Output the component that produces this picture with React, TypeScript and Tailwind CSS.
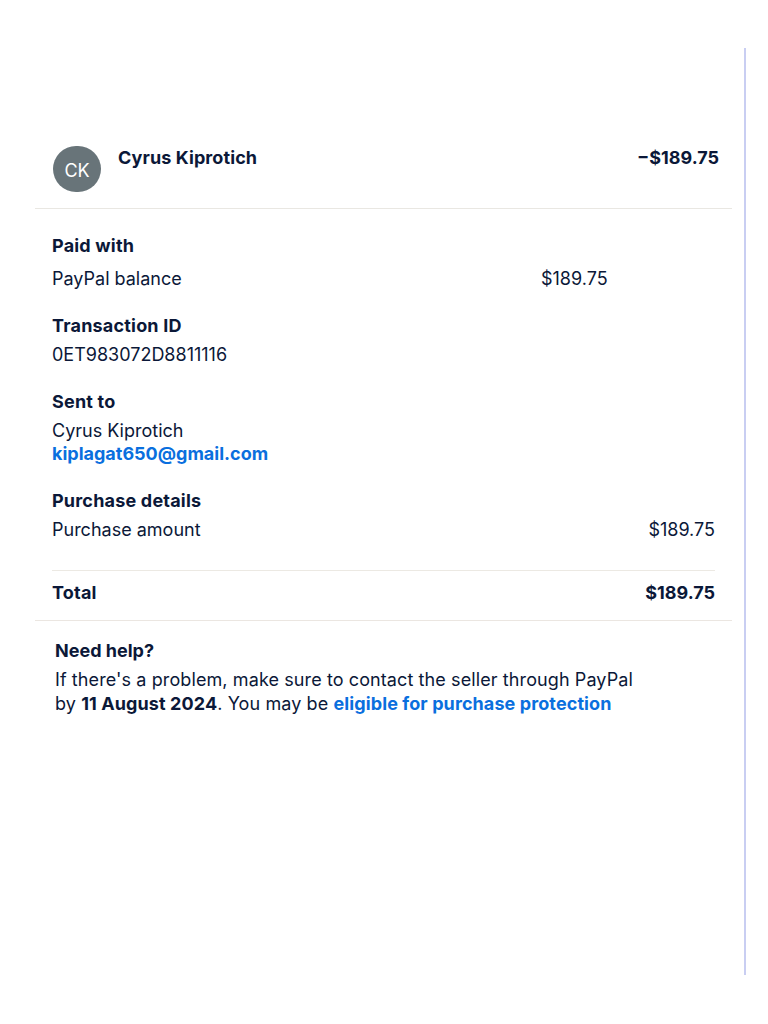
export default function App() {
  return (
    <div className="min-h-[1024px] w-[768px] bg-white text-[#0b1838]" style={{ fontFamily: 'Inter, "Liberation Sans", sans-serif' }}>
      <div className="flex">
        <div className="w-[744px] pt-[48px]">
          <div className="h-[927px] pl-[35px] pr-[12px] pt-[97px]">
            {/* Header */}
            <div className="flex items-start justify-between border-b border-[#e9e7e2] pb-[16px] pl-[18px] pr-[13px]">
              <div className="flex items-start gap-[17px]">
                <div className="mt-[1px] flex h-[46px] w-[48px] items-center justify-center rounded-full bg-[#687479] pt-[2px] text-[18px] text-white">
                  CK
                </div>
                <div className="pt-[1px] text-[18px] font-bold leading-[24px] tracking-[0.1px]">Cyrus Kiprotich</div>
              </div>
              <div className="pt-[1px] text-[18px] font-bold leading-[24px]">−$189.75</div>
            </div>

            {/* Details */}
            <div className="pl-[17px] pr-[17px] pt-[25px]">
              <div className="text-[18px] font-bold leading-[24px] tracking-[0.2px]">Paid with</div>
              <div className="mt-[9px] flex text-[18px] leading-[24px]">
                <span className="w-[489px]">PayPal balance</span>
                <span>$189.75</span>
              </div>

              <div className="mt-[23px] text-[18px] font-bold leading-[24px] tracking-[0.2px]">Transaction ID</div>
              <div className="mt-[5px] text-[18px] leading-[24px]">0ET983072D8811116</div>

              <div className="mt-[23px] text-[18px] font-bold leading-[24px] tracking-[0.2px]">Sent to</div>
              <div className="mt-[5px] text-[18px] leading-[24px]">Cyrus Kiprotich</div>
              <div className="text-[18px] font-bold leading-[22px] text-[#0a6fde]">kiplagat650@gmail.com</div>

              <div className="mt-[24px] text-[18px] font-bold leading-[24px] tracking-[0.2px]">Purchase details</div>
              <div className="mt-[5px] flex justify-between text-[18px] leading-[24px]">
                <span>Purchase amount</span>
                <span>$189.75</span>
              </div>
              <div className="mt-[28px] border-t border-[#ece9e3]" />
              <div className="flex justify-between pt-[10px] text-[18px] font-bold leading-[24px]">
                <span className="tracking-[0.2px]">Total</span>
                <span>$189.75</span>
              </div>
            </div>
            <div className="mt-[15px] border-t border-[#ebe6e1]" />

            {/* Help */}
            <div className="pl-[20px] pt-[18px]">
              <div className="text-[18px] font-bold leading-[24px]">Need help?</div>
              <p className="mt-[5px] text-[18px] leading-[24px] tracking-[0.1px]">
                If there's a problem, make sure to contact the seller through PayPal
                <br />
                by <span className="font-bold">11 August 2024</span>. You may be{' '}
                <span className="font-bold text-[#0a6fde]">eligible for purchase protection</span>
              </p>
            </div>
          </div>
        </div>
        <div className="mt-[48px] h-[927px] w-[2px] bg-[#c9cef2]" />
      </div>
    </div>
  )
}
